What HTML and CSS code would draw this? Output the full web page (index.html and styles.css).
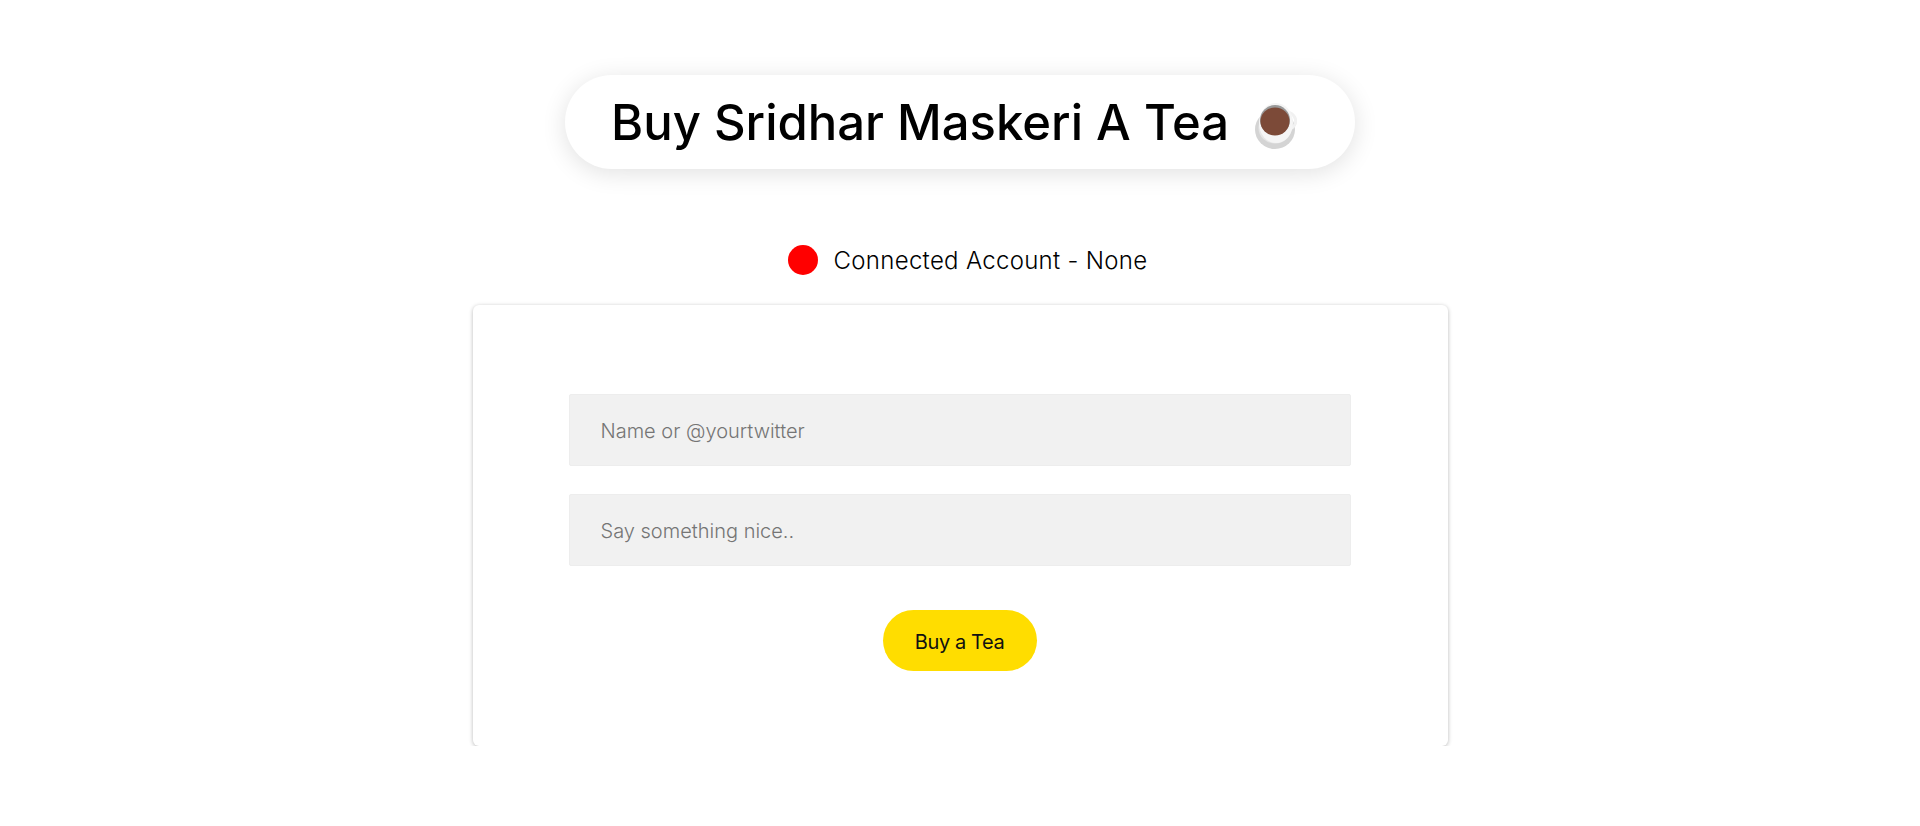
FILE: index.html
```html
<!DOCTYPE html>
<html lang="en">
<head>
    <meta charset="UTF-8">
    <title>Buy Sridhar Maskeri A Tea</title>
    <link rel="stylesheet" href="styles.css">
</head>
<body>
    <main class="page">
        <h1 class="title">
            <span>Buy Sridhar Maskeri A Tea</span>
            <svg class="cup" viewBox="0 0 42 46" aria-hidden="true">
                <ellipse cx="20" cy="26.5" rx="20" ry="19.5" fill="#d4d4d4"/>
                <ellipse cx="20" cy="25" rx="16.5" ry="15.5" fill="#e6e6e6"/>
                <path d="M31 9.5a8.5 8.5 0 0 1 7 14.5l-5 3.5" fill="none" stroke="#f1f1f1" stroke-width="3"/>
                <ellipse cx="21" cy="20" rx="17" ry="20" fill="#f5f5f5"/>
                <ellipse cx="20" cy="17" rx="15" ry="15" fill="#9a9a9a"/>
                <ellipse cx="20" cy="18.5" rx="14.5" ry="14" fill="#7c4a38"/>
            </svg>
        </h1>
        <div class="account">
            <span class="dot"></span>
            <span>Connected Account - None</span>
        </div>
        <form class="card">
            <input class="field" type="text" placeholder="Name or @yourtwitter">
            <input class="field" type="text" placeholder="Say something nice..">
            <button class="buy" type="button">Buy a Tea</button>
        </form>
    </main>
</body>
</html>
```
FILE: styles.css
```css
* {
    box-sizing: border-box;
}
body {
    margin: 0;
    background: #fff;
    color: #000;
    font-family: "Inter", "Noto Sans", sans-serif;
}
.page {
    display: flex;
    flex-direction: column;
    align-items: center;
    padding-top: 75px;
}
.title {
    width: 790px;
    height: 94px;
    margin: 0;
    padding: 0 46px;
    display: flex;
    align-items: center;
    gap: 26px;
    border-radius: 47px;
    box-shadow: 0 4px 24px rgba(0, 0, 0, 0.12);
    font-size: 49px;
    font-weight: 500;
}
.cup {
    width: 42px;
    height: 46px;
    margin-top: 8px;
}
.account {
    margin-top: 76px;
    margin-left: 15px;
    display: flex;
    align-items: center;
    gap: 16px;
    font-size: 24px;
    font-weight: 300;
    letter-spacing: 0.3px;
}
.dot {
    width: 30px;
    height: 30px;
    border-radius: 50%;
    background: #f00;
}
.card {
    width: 975px;
    height: 441px;
    margin-top: 30px;
    padding: 89px 97px 0 96px;
    display: flex;
    flex-direction: column;
    align-items: center;
    gap: 28px;
    border-radius: 6px;
    box-shadow: 0 1px 4px rgba(0, 0, 0, 0.28);
}
.field {
    width: 100%;
    height: 72px;
    padding: 2px 31px 0;
    border: 1px solid #ededed;
    border-radius: 2px;
    background: #f1f1f1;
    font-family: inherit;
    font-size: 20px;
    font-weight: 300;
}
.field::placeholder {
    color: #757575;
}
.buy {
    width: 154px;
    height: 61px;
    margin-top: 16px;
    padding: 2px 0 0;
    border: 0;
    border-radius: 31px;
    background: #fd0;
    color: #111;
    font-family: inherit;
    font-size: 20px;
    font-weight: 400;
    letter-spacing: -0.4px;
}
```
